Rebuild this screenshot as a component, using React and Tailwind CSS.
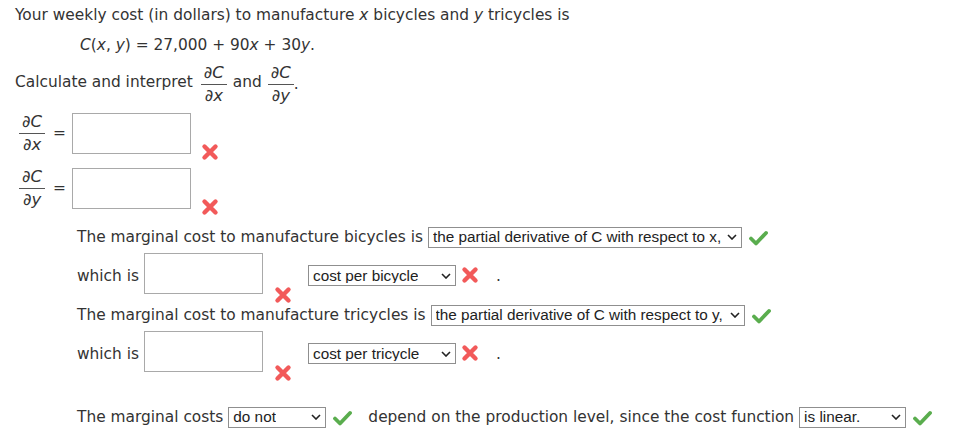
import React from 'react';

const XMark = ({ className = '' }) => (
  <svg viewBox="0 0 18 18" className={`w-[18px] h-[18px] shrink-0 ${className}`}>
    <path d="M3.5 3.5 L14.5 14.5 M14.5 3.5 L3.5 14.5" stroke="#f25a5a" strokeWidth="4.4" strokeLinecap="round" />
  </svg>
);

const Check = ({ className = '' }) => (
  <svg viewBox="0 0 20 16" className={`w-[20px] h-[16px] shrink-0 ${className}`}>
    <path d="M3 8.5 L8 13.5 L18 3" stroke="#5aad4e" strokeWidth="3.8" fill="none" strokeLinecap="round" strokeLinejoin="round" />
  </svg>
);

const Frac = ({ bottom }) => (
  <span className="inline-flex flex-col items-center leading-none text-[16.5px]">
    <span className="px-[3px] pb-[3px] border-b border-[#555]">
      <i>∂C</i>
    </span>
    <span className="pt-[3px]">
      ∂<i>{bottom}</i>
    </span>
  </span>
);

const Select = ({ value, width }) => (
  <span
    className="inline-flex items-center justify-between h-[21px] border border-[#8f8f8f] bg-white pl-[4px] pr-[4px] text-[15.3px] text-[#222] leading-none"
    style={{ width }}
  >
    <span className="whitespace-nowrap overflow-hidden" style={{ fontFamily: '"Liberation Sans", Arial, sans-serif' }}>
      {value}
    </span>
    <svg viewBox="0 0 10 6" className="w-[10px] h-[6px] ml-[3px] shrink-0">
      <path d="M1 1 L5 5 L9 1" stroke="#222" strokeWidth="1.6" fill="none" />
    </svg>
  </span>
);

const Box = ({ className = '' }) => (
  <span className={`inline-block w-[119px] h-[41px] border border-[#a9a9a9] bg-white shrink-0 ${className}`} />
);

export default function App() {
  return (
    <div
      className="w-[975px] h-[444px] bg-white text-[#333] text-[15.4px] pl-[15px] pt-[5px]"
      style={{ fontFamily: '"DejaVu Sans", Verdana, sans-serif' }}
    >
      <div className="leading-[20px] whitespace-nowrap">
        Your weekly cost (in dollars) to manufacture <i>x</i> bicycles and <i>y</i> tricycles is
      </div>
      <div className="leading-[20px] mt-[10px] pl-[65px]">
        <i>C</i>(<i>x</i>, <i>y</i>) = 27,000 + 90<i>x</i> + 30<i>y</i>.
      </div>
      <div className="flex items-center mt-[7px] h-[42px]">
        <span>Calculate and interpret</span>
        <span className="ml-[8px]"><Frac bottom="x" /></span>
        <span className="ml-[6px]">and</span>
        <span className="ml-[6px]"><Frac bottom="y" /></span>
        <span className="mt-[4px]">.</span>
      </div>

      <div className="flex items-center mt-[9px] pl-[4px]">
        <Frac bottom="x" />
        <span className="ml-[8px] mr-[6px]">=</span>
        <Box />
        <XMark className="ml-[10px] self-end -mb-[7px]" />
      </div>
      <div className="flex items-center mt-[14px] pl-[4px]">
        <Frac bottom="y" />
        <span className="ml-[8px] mr-[6px]">=</span>
        <Box />
        <XMark className="ml-[10px] self-end -mb-[7px]" />
      </div>

      <div className="pl-[62px] mt-[18px] whitespace-nowrap">
        <div className="flex items-center h-[22px]">
          <span>The marginal cost to manufacture bicycles is</span>
          <span className="ml-[5px]">
            <Select value="the partial derivative of C with respect to x," width={314} />
          </span>
          <Check className="ml-[6px]" />
        </div>
        <div className="flex items-start mt-[4px]">
          <span className="mt-[12px]">which is</span>
          <Box className="ml-[5px]" />
          <XMark className="ml-[11px] mt-[33px]" />
          <span className="ml-[16px] mt-[12px]"><Select value="cost per bicycle" width={148} /></span>
          <XMark className="ml-[5px] mt-[13px]" />
          <span className="ml-[17px] mt-[12px]">.</span>
        </div>
        <div className="flex items-center h-[22px] mt-[1px]">
          <span>The marginal cost to manufacture tricycles is</span>
          <span className="ml-[5px]">
            <Select value="the partial derivative of C with respect to y," width={314} />
          </span>
          <Check className="ml-[6px]" />
        </div>
        <div className="flex items-start mt-[4px]">
          <span className="mt-[12px]">which is</span>
          <Box className="ml-[5px]" />
          <XMark className="ml-[11px] mt-[33px]" />
          <span className="ml-[16px] mt-[12px]"><Select value="cost per tricycle" width={148} /></span>
          <XMark className="ml-[5px] mt-[13px]" />
          <span className="ml-[17px] mt-[12px]">.</span>
        </div>
        <div className="flex items-center h-[22px] mt-[25px]">
          <span>The marginal costs</span>
          <span className="ml-[5px]"><Select value="do not" width={98} /></span>
          <Check className="ml-[6px]" />
          <span className="ml-[16px]">depend on the production level, since the cost function</span>
          <span className="ml-[5px]"><Select value="is linear." width={107} /></span>
          <Check className="ml-[6px]" />
        </div>
      </div>
    </div>
  );
}
